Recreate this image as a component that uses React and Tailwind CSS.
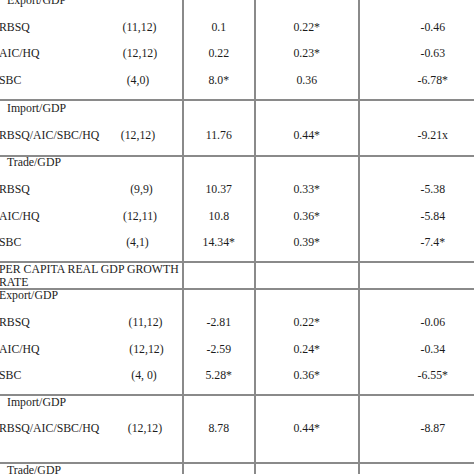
import React from "react";

const LINE = "border-[#8a8a8a]";

function Section({ first, top, headH, gap, pb, header, headClass, rows, grow }) {
  const cols = [0, 1, 2, 3];
  return (
    <div
      className={
        "grid grid-cols-[181.5px_72.5px_103.5px_148.5px] " +
        (first ? "mt-[-6.5px] " : "border-t-2 " + LINE + " ") +
        (grow ? "min-h-[40px]" : "")
      }
    >
      {cols.map((c) => (
        <div
          key={c}
          className={"flex flex-col " + (c > 0 ? "border-l-2 " + LINE : "")}
        >
          <div className={top} />
          <div className={headH + " flex items-center whitespace-nowrap"}>
            {c === 0 && header ? <span className={headClass}>{header}</span> : null}
          </div>
          {rows && rows.length > 0 ? <div className={gap} /> : null}
          {rows &&
            rows.map((r, i) => (
              <div key={i} className="h-[26.5px] flex items-center whitespace-nowrap">
                {c === 0 ? (
                  <div className="flex items-center w-full">
                    <span className="ml-[-1px] w-[101px] shrink-0">{r[0]}</span>
                    <span className={r[1] + " shrink-0 text-center"}>{r[2]}</span>
                  </div>
                ) : (
                  <span className="w-full text-center">{r[c + 2]}</span>
                )}
              </div>
            ))}
          <div className={pb} />
        </div>
      ))}
    </div>
  );
}

export default function App() {
  return (
    <div className="w-[474px] h-[474px] overflow-hidden bg-white text-[#1c1c1c] text-[11.8px] font-['Liberation_Serif','Times_New_Roman',serif]">
      <div className="w-[504px]">
        <Section
          first
          top="h-0"
          headH="h-[15px]"
          gap="h-[6px]"
          pb="h-[5px]"
          header="Export/GDP"
          headClass="ml-[7px]"
          rows={[
            ["RBSQ", "w-[79px]", "(11,12)", "0.1", "0.22*", "-0.46"],
            ["AIC/HQ", "w-[80px]", "(12,12)", "0.22", "0.23*", "-0.63"],
            ["SBC", "w-[76px]", "(4,0)", "8.0*", "0.36", "-6.78*"],
          ]}
        />
        <Section
          top="h-[0.5px]"
          headH="h-[15px]"
          gap="h-[6px]"
          pb="h-[5.5px]"
          header="Import/GDP"
          headClass="ml-[7px]"
          rows={[["RBSQ/AIC/SBC/HQ", "w-[76px]", "(12,12)", "11.76", "0.44*", "-9.21x"]]}
        />
        <Section
          top="h-0"
          headH="h-[13px]"
          gap="h-[7.25px]"
          pb="h-[4.75px]"
          header="Trade/GDP"
          headClass="ml-[7px]"
          rows={[
            ["RBSQ", "w-[83px]", "(9,9)", "10.37", "0.33*", "-5.38"],
            ["AIC/HQ", "w-[80px]", "(12,11)", "10.8", "0.36*", "-5.84"],
            ["SBC", "w-[75px]", "(4,1)", "14.34*", "0.39*", "-7.4*"],
          ]}
        />
        <div className={"grid grid-cols-[181.5px_72.5px_103.5px_148.5px] border-t-2 " + LINE}>
          <div className="h-[24.5px] leading-[13px] whitespace-nowrap">
            <div className="ml-[-1px]">PER CAPITA REAL GDP GROWTH</div>
            <div className="ml-[-1px]">RATE</div>
          </div>
          <div className={"border-l-2 " + LINE} />
          <div className={"border-l-2 " + LINE} />
          <div className={"border-l-2 " + LINE} />
        </div>
        <Section
          top="h-0"
          headH="h-[13px]"
          gap="h-[7.25px]"
          pb="h-[4.75px]"
          header="Export/GDP"
          headClass="ml-[-1px]"
          rows={[
            ["RBSQ", "w-[91px]", "(11,12)", "-2.81", "0.22*", "-0.06"],
            ["AIC/HQ", "w-[93px]", "(12,12)", "-2.59", "0.24*", "-0.34"],
            ["SBC", "w-[88px]", "(4, 0)", "5.28*", "0.36*", "-6.55*"],
          ]}
        />
        <Section
          top="h-[0.5px]"
          headH="h-[13px]"
          gap="h-[6.25px]"
          pb="h-[19.75px]"
          header="Import/GDP"
          headClass="ml-[7px]"
          rows={[["RBSQ/AIC/SBC/HQ", "w-[90px]", "(12,12)", "8.78", "0.44*", "-8.87"]]}
        />
        <Section
          grow
          top="h-[0.5px]"
          headH="h-[13px]"
          gap="h-0"
          pb="h-[20px]"
          header="Trade/GDP"
          headClass="ml-[7px]"
          rows={[]}
        />
      </div>
    </div>
  );
}
